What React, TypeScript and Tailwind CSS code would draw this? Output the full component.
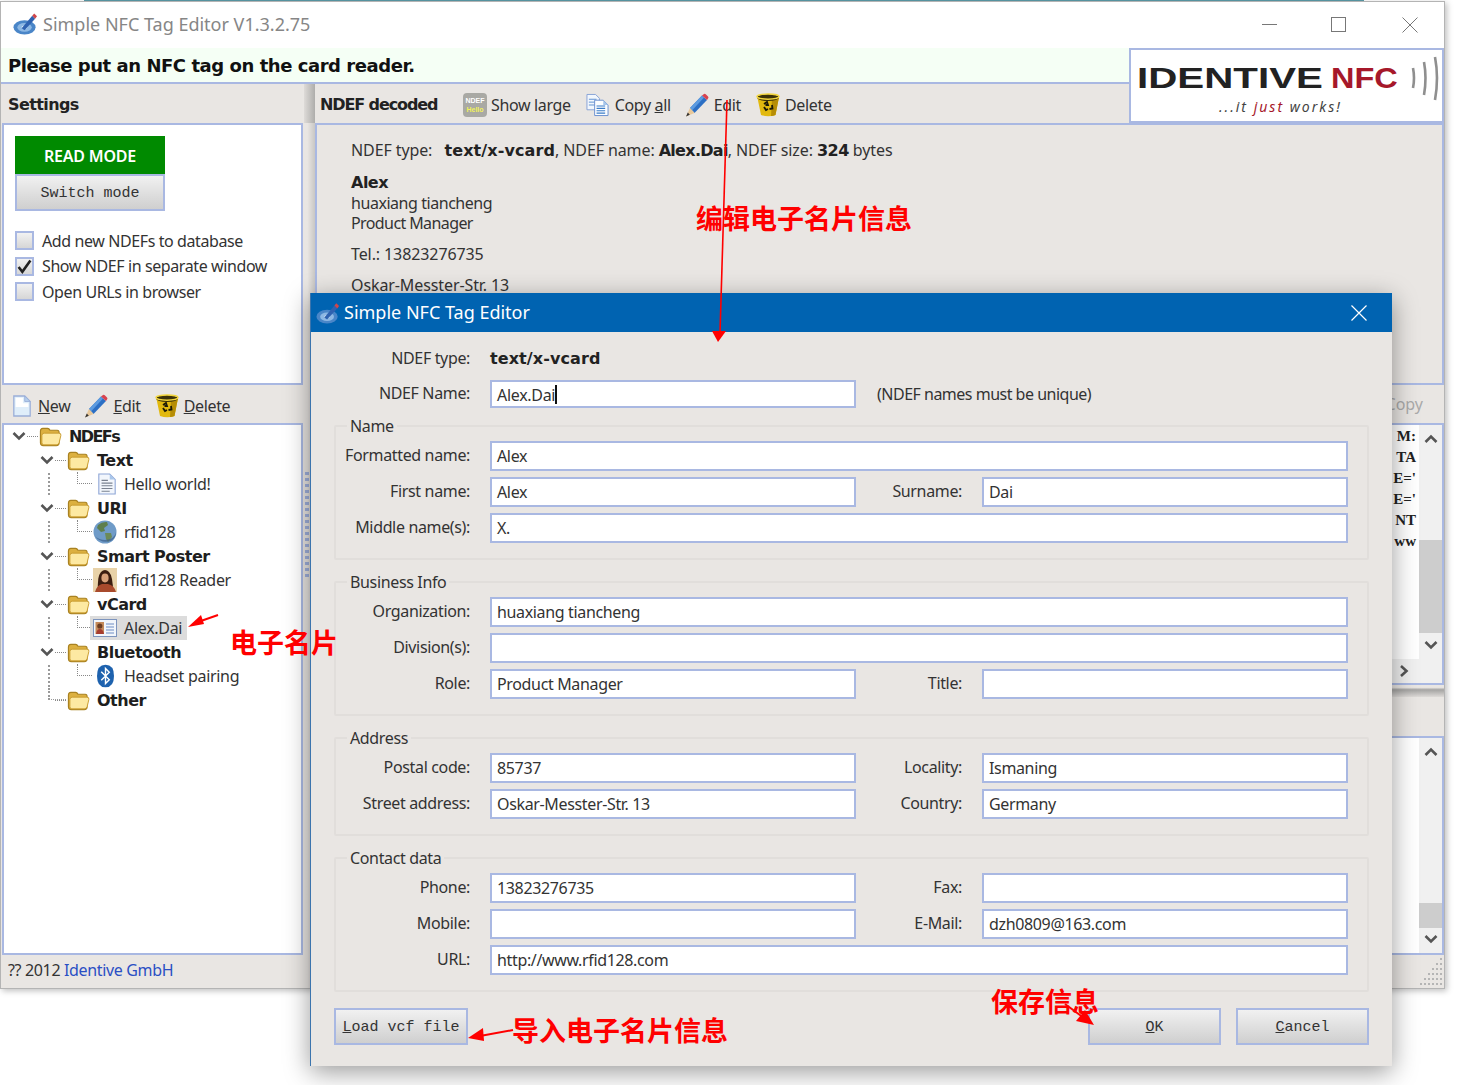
import React from 'react';

const ui = "font-['Noto_Sans','Open_Sans',sans-serif]";
const heavy = "font-['DejaVu_Sans',sans-serif] font-bold";
const mono = "font-['Liberation_Mono',monospace]";
const cjk = "font-['Noto_Sans_CJK_SC',sans-serif]";

function AppIcon({ className = '' }: { className?: string }) {
  return (
    <svg viewBox="0 0 26 26" className={className}>
      <ellipse cx="12" cy="17" rx="11.5" ry="7.5" fill="#4a86c8" />
      <ellipse cx="12" cy="17" rx="7.5" ry="4.6" fill="#8db8e4" />
      <ellipse cx="12" cy="17" rx="3" ry="1.8" fill="#e4eef8" />
      <path d="M9 18 L20 5 L23 8 L12 20 Z" fill="#2f62b0" />
      <path d="M20 5 L22 2.5 L25 5.5 L23 8 Z" fill="#d0464a" />
    </svg>
  );
}

function PencilIcon() {
  return (
    <svg viewBox="0 0 24 24" className="w-[24px] h-[24px] shrink-0">
      <path d="M5 15 L17 2.5 L22 7 L9.5 20 Z" fill="#2c6fc4" />
      <path d="M5 15 L17 2.5 L19 4.5 L7 17.5 Z" fill="#5c9be0" />
      <path d="M17 2.5 L19 1 Q20 0.5 21 1.5 L23 3.5 Q24 4.5 23 5.5 L22 7 Z" fill="#d8434f" />
      <path d="M5 15 L9.5 20 L1 23.5 Z" fill="#e8c89a" />
      <path d="M2.8 19.5 L4.8 21.8 L1 23.5 Z" fill="#333" />
    </svg>
  );
}

function TrashIcon() {
  return (
    <svg viewBox="0 0 24 24" className="w-[24px] h-[24px] shrink-0">
      <path d="M1.5 5 L23 4 L19.5 22 Q12 24.5 5 22 Z" fill="#e2b90f" />
      <path d="M16 5 L23 4 L19.5 22 Q17.5 23 15 23 Z" fill="#b68d06" />
      <ellipse cx="12" cy="4.5" rx="11" ry="3.5" fill="#3c3208" />
      <ellipse cx="12" cy="3.6" rx="11" ry="2.6" fill="none" stroke="#f2d53c" strokeWidth="1.4" />
      <path d="M8 11 L11 9 L12 12 L9.5 12 M16 12 L16.5 15.5 L13.5 16 M8 14 L10 17 L12 16" fill="none" stroke="#1c1a08" strokeWidth="1.8" />
    </svg>
  );
}

function NewIcon() {
  return (
    <svg viewBox="0 0 22 24" className="w-[20px] h-[24px] shrink-0">
      <path d="M2 1 H14 L20 7 V23 H2 Z" fill="#dfeefa" stroke="#9aaed8" strokeWidth="1.4" />
      <path d="M14 1 V7 H20 Z" fill="#b4cfee" stroke="#9aaed8" strokeWidth="1" />
      <path d="M4 3 H12 V9 H18 V13 H4 Z" fill="#ffffff" />
    </svg>
  );
}

function CopyIcon() {
  return (
    <svg viewBox="0 0 24 24" className="w-[23px] h-[24px] shrink-0">
      <path d="M1 1 H10 L14 5 V17 H1 Z" fill="#f2f7fd" stroke="#86a2d6" strokeWidth="1" />
      <path d="M3 6 H11 M3 9 H11 M3 12 H11" stroke="#5e8fd0" strokeWidth="1" />
      <path d="M9 7 H18 L23 12 V23 H9 Z" fill="#fbfdff" stroke="#6b90cf" strokeWidth="1" />
      <path d="M18 7 V12 H23 Z" fill="#a6c5ea" />
      <path d="M11 13 H20 M11 15.5 H20 M11 18 H20 M11 20.5 H20" stroke="#3c7dc8" strokeWidth="1.2" />
    </svg>
  );
}

function HelloIcon() {
  return (
    <div className="w-[24px] h-[24px] shrink-0 rounded-[4px] bg-[#a9a9a4] flex flex-col items-center justify-center leading-[9px] text-[7px] font-bold font-['Liberation_Sans',sans-serif]">
      <span className="text-white">NDEF</span>
      <span className="text-[#f2f25a]">Hello</span>
    </div>
  );
}

function FolderIcon() {
  return (
    <svg viewBox="0 0 24 21" className="w-[23px] h-[21px] shrink-0">
      <path d="M1.5 5 Q1.5 2 4 2 H9 Q10.5 2 11.5 4 H19 Q21 4 21 6.5 V17 Q21 20 18 20 H4.5 Q1.5 20 1.5 17 Z" fill="#dcb040" stroke="#a98222" strokeWidth="1.2" />
      <path d="M3 9.5 Q3 7 5.5 7 H20.5 Q23.5 7 22.8 9.5 L21 17 Q20.4 19.2 18 19.2 H5 Q3 19.2 3 17 Z" fill="#fde9a2" stroke="#c99c30" strokeWidth="1" />
    </svg>
  );
}

function DocIcon() {
  return (
    <svg viewBox="0 0 22 24" className="w-[20px] h-[24px]">
      <path d="M2 1 H14 L20 7 V23 H2 Z" fill="#f2f6fc" stroke="#8ea6d6" strokeWidth="1.2" />
      <path d="M14 1 V7 H20 Z" fill="#a9c6ea" />
      <path d="M5 8 H12 M5 11 H17 M5 14 H17 M5 17 H17 M5 20 H14" stroke="#7a8290" strokeWidth="1.2" />
    </svg>
  );
}

function GlobeIcon() {
  return (
    <svg viewBox="0 0 24 24" className="w-[24px] h-[24px]">
      <circle cx="12" cy="12" r="11.5" fill="#6f9bc8" />
      <path d="M5 5 Q9 1.5 14 2 L15 5 L11 8 L12 11 L8 12 L4 8 Z" fill="#5e7f4e" />
      <path d="M12 13 L18 13 L19 17 L15 22 L13 19 Z" fill="#6c8a58" />
      <path d="M2 16 Q8 24 18 21 Q23 18 23 12 Q22 19 12 20 Q6 20 2 16 Z" fill="#3c5f8a" opacity=".7" />
    </svg>
  );
}

function PhotoIcon() {
  return (
    <svg viewBox="0 0 24 24" className="w-[24px] h-[24px]">
      <rect width="24" height="24" fill="#e8d2a8" />
      <path d="M5 24 Q4 8 8 4 Q12 0 16 4 Q20 8 20 24 Z" fill="#3c1e10" />
      <ellipse cx="12" cy="10" rx="3.6" ry="4.4" fill="#d9a27a" />
      <path d="M2 24 Q4 17 9 16 H15 Q21 17 23 24 Z" fill="#a84a2c" />
    </svg>
  );
}

function CardIcon() {
  return (
    <svg viewBox="0 0 24 20" className="w-[24px] h-[20px]">
      <rect x="0.5" y="1.5" width="23" height="17" fill="#f2f6fb" stroke="#7d94bd" />
      <rect x="2.5" y="4" width="8.5" height="12" fill="#c48a5a" />
      <circle cx="6.8" cy="8" r="2.6" fill="#6b3d22" />
      <path d="M3 16 Q4 11 6.8 11 Q10 11 11 16 Z" fill="#a63c2e" />
      <path d="M13 6 H21 M13 9 H21 M13 12 H21 M13 15 H21" stroke="#6d8cc4" strokeWidth="1.2" />
    </svg>
  );
}

function BluetoothIcon() {
  return (
    <svg viewBox="0 0 18 24" className="w-[17px] h-[24px] mr-[3px]">
      <path d="M9 0 Q18 0 18 12 Q18 24 9 24 Q0 24 0 12 Q0 0 9 0 Z" fill="#1e62ae" />
      <path d="M4.5 7.5 L13 16 L9 20 V4 L13 8 L4.5 16.5" fill="none" stroke="#fff" strokeWidth="1.5" />
    </svg>
  );
}

function Chevron({ dir = 'down', className = '' }: { dir?: 'down' | 'up' | 'right'; className?: string }) {
  const d = dir === 'down' ? 'M1.5 3 L7 8.5 L12.5 3' : dir === 'up' ? 'M1.5 9 L7 3.5 L12.5 9' : 'M4 1 L9.5 6 L4 11';
  return (
    <svg viewBox="0 0 14 12" className={`w-[14px] h-[12px] shrink-0 ${className}`}>
      <path d={d} fill="none" stroke="#555" strokeWidth="2.6" />
    </svg>
  );
}

function ToolItem({ icon, children, className = '', gap = 'gap-[5px]' }: { icon: React.ReactNode; children: React.ReactNode; className?: string; gap?: string }) {
  return (
    <div className={`flex items-center ${gap} ${className}`}>
      {icon}
      <span className="text-[16px] tracking-[-0.35px] text-[#333]">{children}</span>
    </div>
  );
}

function Check({ label, checked = false }: { label: string; checked?: boolean }) {
  return (
    <div className="flex items-center gap-[8px] h-[19px]">
      <div className="w-[19px] h-[19px] border-2 border-[#a9b8e2] bg-gradient-to-b from-[#f2f2f2] to-[#d6d6d6] flex items-center justify-center">
        {checked && (
          <svg viewBox="0 0 14 14" className="w-[15px] h-[15px]">
            <path d="M1.5 7.5 L5 12 L12.5 1.5" fill="none" stroke="#222" strokeWidth="2.4" />
          </svg>
        )}
      </div>
      <span className="text-[16px] tracking-[-0.4px] text-[#333] whitespace-nowrap">{label}</span>
    </div>
  );
}

const tree = [
  { name: 'Text', leaf: 'Hello world!', icon: <DocIcon /> },
  { name: 'URI', leaf: 'rfid128', icon: <GlobeIcon /> },
  { name: 'Smart Poster', leaf: 'rfid128 Reader', icon: <PhotoIcon /> },
  { name: 'vCard', leaf: 'Alex.Dai', icon: <CardIcon />, selected: true },
  { name: 'Bluetooth', leaf: 'Headset pairing', icon: <BluetoothIcon /> },
];

function FolderRow({ name, indent, chevron = true, tracking = 'tracking-[-0.5px]' }: { name: string; indent: string; chevron?: boolean; tracking?: string }) {
  return (
    <div className={`h-[24px] flex items-center relative ${indent}`}>
      {chevron ? <Chevron /> : <div className="w-[14px]" />}
      <div className="w-[11px] mx-[1px] border-t border-dotted border-[#888]" />
      <FolderIcon />
      <span className={`ml-[7px] mt-[2px] text-[16px] text-[#1e1e1e] whitespace-nowrap ${tracking} ${heavy}`}>{name}</span>
    </div>
  );
}

function LeafRow({ item }: { item: (typeof tree)[number] }) {
  return (
    <div className="h-[24px] flex items-center relative pl-[86px]">
      <div className="absolute left-[44px] top-[1px] h-[22px] border-l-2 border-dotted border-[#999]" />
      <div className="absolute left-[73px] top-0 h-[12px] w-[15px] border-l border-b border-dotted border-[#888]" />
      <div className={`flex items-center h-[24px] pr-[5px] relative ${item.selected ? 'bg-[#dcdcdc]' : ''}`}>
        <div className="w-[27px] flex items-center justify-end">{item.icon}</div>
        <span className="ml-[7px] text-[16px] tracking-[-0.3px] text-[#333] whitespace-nowrap">{item.leaf}</span>
      </div>
    </div>
  );
}

function Scrollbar({ thumbTop, thumbH }: { thumbTop: number; thumbH: number }) {
  return (
    <div className="w-[23px] h-full bg-[#f0f0f0] relative flex flex-col items-center justify-between py-[8px]">
      <Chevron dir="up" />
      <div className="absolute left-0 right-0 bg-[#cdcdcd]" style={{ top: thumbTop, height: thumbH }} />
      <Chevron dir="down" />
    </div>
  );
}

function Field({ value, className = '' }: { value?: string; className?: string }) {
  return (
    <div className={`h-[30px] border-2 border-[#a9b8e2] bg-white pl-[5px] flex items-center text-[16px] tracking-[-0.35px] text-[#333] whitespace-nowrap ${className}`}>
      {value}
    </div>
  );
}

function Label({ children }: { children: React.ReactNode }) {
  return <div className="text-right text-[16px] tracking-[-0.35px] text-[#333] -mt-[3px] whitespace-nowrap">{children}</div>;
}

function Group({ title, children }: { title: string; children: React.ReactNode }) {
  return (
    <fieldset className="border-2 border-[#e1dedb] rounded-[2px] pt-[5px] pb-[15px]">
      <legend className="ml-[11px] px-[3px] h-[20px] leading-[20px] text-[16px] tracking-[-0.35px] text-[#333]">{title}</legend>
      <div className="grid grid-cols-[134px_366px_86px_366px] gap-x-[20px] gap-y-[6px] items-center">
        {children}
      </div>
    </fieldset>
  );
}

function Row({ a, av, b, bv }: { a: string; av?: string; b?: string; bv?: string }) {
  if (!b) {
    return (
      <>
        <Label>{a}</Label>
        <Field value={av} className="col-span-3" />
      </>
    );
  }
  return (
    <>
      <Label>{a}</Label>
      <Field value={av} />
      <Label>{b}</Label>
      <Field value={bv} />
    </>
  );
}

function DlgButton({ hot, rest, className = '' }: { hot: string; rest: string; className?: string }) {
  return (
    <button className={`h-[37px] pt-[4px] border-2 border-[#a9b8e2] bg-gradient-to-b from-[#f1f1f1] to-[#cfcfcf] text-[15px] text-[#333] ${mono} ${className}`}>
      <span className="underline">{hot}</span>
      {rest}
    </button>
  );
}

function Grip() {
  const dots: React.ReactNode[] = [];
  for (let r = 0; r < 6; r++) {
    for (let c = 5 - r; c < 6; c++) {
      dots.push(<rect key={`${r}-${c}`} x={c * 4} y={r * 5} width="2" height="2" fill="#b5b5b5" />);
    }
  }
  return (
    <svg viewBox="0 0 24 30" className="w-[24px] h-[30px]">
      {dots}
    </svg>
  );
}

export default function App() {
  return (
    <div className={`relative w-[1466px] h-[1085px] bg-white overflow-hidden ${ui}`}>
      {/* sliver of desktop above the window */}
      <div className="absolute top-0 left-[84px] w-[1280px] h-[2px] bg-[#5a9aa8]" />

      {/* main window */}
      <div className="absolute left-0 top-[1px] w-[1445px] h-[988px] border border-[#b4b4b4] bg-[#e9e6e3] flex flex-col shadow-[2px_2px_6px_rgba(0,0,0,0.25)]">
        <div className="h-[46px] shrink-0 bg-white flex items-center relative">
          <AppIcon className="w-[25px] h-[25px] ml-[12px] mt-[-3px]" />
          <span className="ml-[5px] mt-[-1px] text-[18px] text-[#868686] whitespace-nowrap">Simple NFC Tag Editor V1.3.2.75</span>
          <div className="ml-auto flex items-center text-[#6b6b6b] mt-[-1px]">
            <div className="w-[15px] border-t border-[#777] mr-[54px]" />
            <div className="w-[15px] h-[15px] border border-[#777] mr-[56px]" />
            <svg viewBox="0 0 16 16" className="w-[16px] h-[16px] mr-[26px]">
              <path d="M0.5 0.5 L15.5 15.5 M15.5 0.5 L0.5 15.5" stroke="#777" strokeWidth="1" />
            </svg>
          </div>
        </div>

        <div className="h-[75px] shrink-0 flex">
          <div className="flex-1 flex flex-col">
            <div className={`h-[36px] bg-[#f5fff5] border-b-2 border-[#a9b8e2] flex items-center pl-[7px] text-[18px] tracking-[-0.45px] text-[#111] whitespace-nowrap ${heavy}`}>
              Please put an NFC tag on the card reader.
            </div>
            <div className="flex-1 flex">
              <div className={`w-[303px] flex items-center pl-[7px] pt-[2px] text-[16px] tracking-[-0.6px] text-[#222] ${heavy}`}>Settings</div>
              <div className="w-[11px] bg-gradient-to-r from-[#dedbd8] to-[#aeadab]" />
              <div className="flex-1 flex items-center pl-[5px] pt-[3px]">
                <span className={`w-[143px] text-[16px] tracking-[-1.1px] text-[#222] ${heavy}`}>NDEF decoded</span>
                <ToolItem icon={<HelloIcon />} className="mr-[15px]" gap="gap-[4px]">Show large</ToolItem>
                <ToolItem icon={<CopyIcon />} className="mr-[14px]" gap="gap-[6px]">
                  Copy <span className="underline">a</span>ll
                </ToolItem>
                <ToolItem icon={<PencilIcon />} className="mr-[15px]">Edit</ToolItem>
                <ToolItem icon={<TrashIcon />}>Delete</ToolItem>
              </div>
            </div>
          </div>
          {/* logo */}
          <div className="w-[315px] border-2 border-[#a9b8e2] bg-white relative overflow-hidden font-['Liberation_Sans',sans-serif]">
            <span className="absolute left-[6px] top-[12px] text-[29px] leading-[32px] font-bold text-[#222] whitespace-nowrap origin-left scale-x-[1.39]">IDENTIVE</span>
            <span className="absolute left-[200px] top-[12px] text-[29px] leading-[32px] font-bold text-[#a6182a] whitespace-nowrap origin-left scale-x-[1.12]">NFC</span>
            <svg viewBox="0 0 32 48" className="absolute right-0 top-[6px] w-[32px] h-[48px]">
              <path d="M3 12 Q5 22 3 32" fill="none" stroke="#8f8f8f" strokeWidth="2.6" />
              <path d="M14 6 Q17 22 14 39" fill="none" stroke="#8f8f8f" strokeWidth="2.6" />
              <path d="M25 1 Q29 22 25 44" fill="none" stroke="#8f8f8f" strokeWidth="2.6" />
            </svg>
            <div className={`absolute left-[88px] top-[46px] text-[14px] italic tracking-[2px] text-[#444] whitespace-nowrap ${ui}`}>
              ...it <span className="text-[#a6182a]">just</span> works!
            </div>
          </div>
        </div>

        <div className="flex-1 flex min-h-0">
          {/* left column */}
          <div className="w-[303px] flex flex-col">
            <div className="h-[262px] mx-[1px] border-2 border-[#a9b8e2] bg-white pl-[11px] pt-[11px]">
              <div className="w-[150px]">
                <div className="h-[38px] bg-[#008a00] pt-[1px] flex items-center justify-center text-white text-[16px] font-semibold tracking-[-0.2px]">READ MODE</div>
                <div className={`h-[37px] pt-[4px] border-2 border-[#a9b8e2] bg-gradient-to-b from-[#f1f1f1] to-[#cfcfcf] flex items-center justify-center text-[15px] text-[#333] ${mono}`}>Switch mode</div>
              </div>
              <div className="mt-[20px] flex flex-col gap-[6.5px]">
                <Check label="Add new NDEFs to database" />
                <Check label="Show NDEF in separate window" checked />
                <Check label="Open URLs in browser" />
              </div>
            </div>
            <div className="h-[38px] flex items-center pl-[11px] pt-[3px]">
              <ToolItem icon={<NewIcon />} className="mr-[14px]" gap="gap-[6px]">
                <span className="underline">N</span>ew
              </ToolItem>
              <ToolItem icon={<PencilIcon />} className="mr-[14px]">
                <span className="underline">E</span>dit
              </ToolItem>
              <ToolItem icon={<TrashIcon />}>
                <span className="underline">D</span>elete
              </ToolItem>
            </div>
            <div className="h-[532px] mx-[1px] border-2 border-[#a9b8e2] bg-white">
              <div className="-mt-[1px]">
                <FolderRow name="NDEFs" indent="pl-[8px]" tracking="tracking-[-1.6px]" />
                {tree.map((item) => (
                  <React.Fragment key={item.name}>
                    <FolderRow name={item.name} indent="pl-[36px]" />
                    <LeafRow item={item} />
                  </React.Fragment>
                ))}
                <div className="relative">
                  <div className="absolute left-[44px] top-0 h-[12px] w-[18px] border-l-2 border-b border-dotted border-[#999]" />
                  <FolderRow name="Other" indent="pl-[36px]" chevron={false} />
                </div>
              </div>
            </div>
            <div className="flex-1 flex items-center pl-[7px] pb-[4px] text-[16px] tracking-[-0.35px] text-[#333]">
              ?? 2012&nbsp;<span className="text-[#2a4fc4]">Identive GmbH</span>
            </div>
          </div>

          {/* splitter */}
          <div className="w-[11px] relative bg-gradient-to-r from-[#e9e6e3] from-30% to-[#c9c7c4]">
            <div className="absolute left-[1px] top-[349px] w-[4px] h-[106px] bg-[repeating-linear-gradient(to_bottom,#9fb0dc_0,#9fb0dc_3px,transparent_3px,transparent_6px)]" />
          </div>

          {/* right column */}
          <div className="flex-1 flex flex-col">
            <div className="h-[262px] border-2 border-[#a9b8e2] pl-[34px] pt-[13px] text-[16px] tracking-[-0.1px] text-[#333]">
              <div className="h-[24px] whitespace-nowrap">
                NDEF type:&nbsp;&nbsp; <b className={`text-[#222] text-[16px] tracking-[0.1px] ${heavy}`}>text/x-vcard</b>, NDEF name: <b className={`text-[#222] text-[16px] tracking-[-0.7px] ${heavy}`}>Alex.Dai</b>, NDEF size: <b className={`text-[#222] text-[16px] tracking-[-0.5px] ${heavy}`}>324</b> bytes
              </div>
              <div className={`mt-[11px] h-[20px] text-[16px] tracking-[-0.5px] text-[#222] leading-[20px] ${heavy}`}>Alex</div>
              <div className="h-[20px] leading-[20px] tracking-[-0.45px]">huaxiang tiancheng</div>
              <div className="h-[20px] leading-[20px] tracking-[-0.6px]">Product Manager</div>
              <div className="mt-[11px] h-[20px] leading-[20px]">Tel.: 13823276735</div>
              <div className="mt-[11px] h-[20px] leading-[20px]">Oskar-Messter-Str. 13</div>
            </div>
            <div className="h-[38px] flex items-center justify-end pr-[21px] text-[16px] text-[#aaa]">Copy</div>
            <div className="h-[262px] border-2 border-[#a9b8e2] bg-[#f0f0f0] flex flex-col">
              <div className="flex-1 flex min-h-0">
                <div className="flex-1 bg-white pr-[3px] pt-[1px] text-right text-[15px] font-bold leading-[21px] text-[#222] font-['Liberation_Serif',serif]">
                  <div>M:</div>
                  <div>TA</div>
                  <div>E='</div>
                  <div>E='</div>
                  <div>NT</div>
                  <div>ww</div>
                </div>
                <Scrollbar thumbTop={115} thumbH={93} />
              </div>
              <div className="h-[24px] flex items-center justify-end pr-[31px]">
                <Chevron dir="right" />
              </div>
            </div>
            <div className="h-[12px] bg-gradient-to-b from-[#e9e6e3] from-20% via-[#a5a4a3] via-40% to-[#dedbd8]" />
            <div className="h-[39px]" />
            <div className="h-[219px] border-2 border-[#a9b8e2] bg-white flex justify-end">
              <Scrollbar thumbTop={165} thumbH={25} />
            </div>
            <div className="flex-1 flex justify-end items-end">
              <Grip />
            </div>
          </div>
        </div>
      </div>

      {/* edit dialog */}
      <div className="absolute left-[310px] top-[293px] w-[1082px] h-[773px] bg-[#e9e6e3] border-l border-[#3b74ad] flex flex-col shadow-[0_6px_24px_rgba(0,0,0,0.4)]">
        <div className="h-[39px] shrink-0 bg-[#0063b1] flex items-center">
          <AppIcon className="w-[24px] h-[24px] ml-[5px]" />
          <span className="ml-[4px] text-[18px] text-white whitespace-nowrap">Simple NFC Tag Editor</span>
          <svg viewBox="0 0 16 16" className="w-[16px] h-[16px] ml-auto mr-[25px]">
            <path d="M0.5 0.5 L15.5 15.5 M15.5 0.5 L0.5 15.5" stroke="#fff" strokeWidth="1.2" />
          </svg>
        </div>
        <div className="flex-1 flex flex-col pl-[23px] pr-[23px] pt-[13px]">
          <div className="grid grid-cols-[136px_366px_1fr] gap-x-[20px] items-center">
            <Label>NDEF type:</Label>
            <div className={`h-[28px] flex items-center text-[16px] tracking-[0.1px] text-[#222] ${heavy}`}>text/x-vcard</div>
            <div />
          </div>
          <div className="mt-[7px] grid grid-cols-[136px_366px_1fr] gap-x-[20px] items-center">
            <Label>NDEF Name:</Label>
            <div className="h-[28px] border-2 border-[#a9b8e2] bg-white pl-[5px] pt-[1px] flex items-center text-[16px] tracking-[-0.3px] text-[#333]">
              Alex.Dai
              <span className="inline-block w-[1.5px] h-[19px] bg-[#111]" />
            </div>
            <div className="ml-[1px] text-[16px] tracking-[-0.5px] text-[#333] whitespace-nowrap">(NDEF names must be unique)</div>
          </div>

          <div className="mt-[8px] flex flex-col gap-[12px]">
            <Group title="Name">
              <Row a="Formatted name:" av="Alex" />
              <Row a="First name:" av="Alex" b="Surname:" bv="Dai" />
              <Row a="Middle name(s):" av="X." />
            </Group>
            <Group title="Business Info">
              <Row a="Organization:" av="huaxiang tiancheng" />
              <Row a="Division(s):" />
              <Row a="Role:" av="Product Manager" b="Title:" />
            </Group>
            <Group title="Address">
              <Row a="Postal code:" av="85737" b="Locality:" bv="Ismaning" />
              <Row a="Street address:" av="Oskar-Messter-Str. 13" b="Country:" bv="Germany" />
            </Group>
            <Group title="Contact data">
              <Row a="Phone:" av="13823276735" b="Fax:" />
              <Row a="Mobile:" b="E-Mail:" bv="dzh0809@163.com" />
              <Row a="URL:" av="http://www.rfid128.com" />
            </Group>
          </div>

          <div className="mt-[16px] flex">
            <DlgButton hot="L" rest="oad vcf file" className="w-[134px]" />
            <DlgButton hot="O" rest="K" className="w-[133px] ml-auto" />
            <DlgButton hot="C" rest="ancel" className="w-[133px] ml-[15px]" />
          </div>
        </div>
      </div>

      {/* red annotations drawn over the screenshot */}
      <svg viewBox="0 0 1466 1085" className="absolute inset-0 w-[1466px] h-[1085px] pointer-events-none">
        <path d="M727 100 L720 333" stroke="#f00" strokeWidth="1.6" fill="none" />
        <path d="M712 331 L726 331 L718 342 Z" fill="#f00" />
        <path d="M218 615 L198 622" stroke="#f00" strokeWidth="2" fill="none" />
        <path d="M188 627 L201 615 L204 624 Z" fill="#f00" />
        <path d="M513 1030 L480 1036" stroke="#f00" strokeWidth="2" fill="none" />
        <path d="M468 1038 L483 1028 L484 1041 Z" fill="#f00" />
        <path d="M1065 1004 L1084 1018" stroke="#f00" strokeWidth="2" fill="none" />
        <path d="M1094 1025 L1076 1021 L1085 1010 Z" fill="#f00" />
      </svg>
      <div className={`absolute left-[696px] top-[198px] text-[27px] leading-[40px] font-bold text-[#f00] whitespace-nowrap ${cjk}`}>编辑电子名片信息</div>
      <div className={`absolute left-[230px] top-[622px] text-[27px] leading-[40px] font-bold text-[#f00] whitespace-nowrap ${cjk}`}>电子名片</div>
      <div className={`absolute left-[512px] top-[1010px] text-[27px] leading-[40px] font-bold text-[#f00] whitespace-nowrap ${cjk}`}>导入电子名片信息</div>
      <div className={`absolute left-[991px] top-[981px] text-[27px] leading-[40px] font-bold text-[#f00] whitespace-nowrap ${cjk}`}>保存信息</div>
    </div>
  );
}
